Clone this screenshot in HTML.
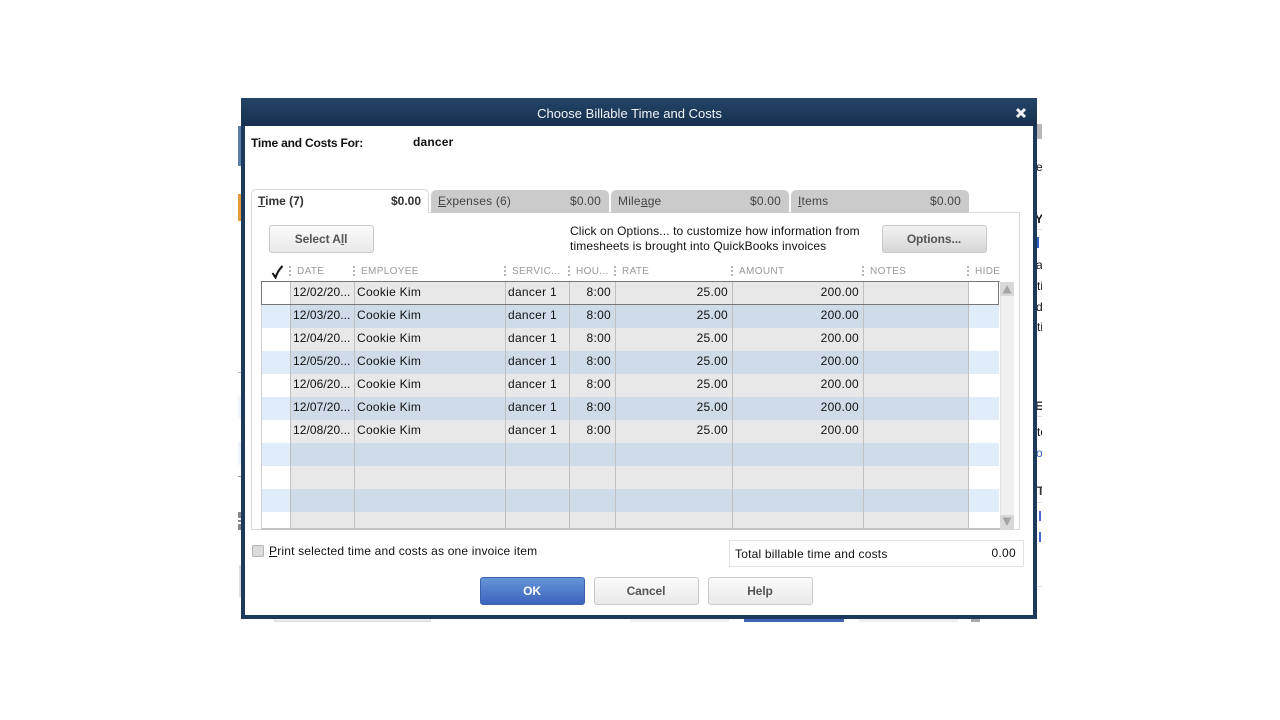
<!DOCTYPE html>
<html><head><meta charset="utf-8">
<style>
html,body{margin:0;padding:0;background:#fff;width:1280px;height:720px;overflow:hidden}
body{position:relative;font:12px "Liberation Sans",Arial,sans-serif;color:#111}
div,span.a{position:absolute;box-sizing:border-box}
.t{white-space:nowrap;line-height:14px;height:14px}
.r{text-align:right}
u{text-decoration:underline}
.tab{background:#cbcbcb;border-radius:5px 5px 0 0;height:23px;top:190px;color:#444}
.btn{border:1px solid #c9c9c9;border-radius:3px;background:linear-gradient(#fbfbfb,#e9e9e9);height:28px;width:105px;text-align:center;line-height:26px;font-weight:bold;color:#555;letter-spacing:-.1px;padding-right:1px}
.h{top:266px;color:#999;font-size:10px;letter-spacing:.35px;line-height:12px;height:12px;white-space:nowrap}
.g{width:2px;top:266px;height:11px;background:repeating-linear-gradient(#b4b4b4 0 2px,transparent 2px 4px)}
.v{top:282px;width:1px;height:246px;background:#c0c0c0}
.row{left:262px;width:737px;height:23px}
.cell{font-size:12px;letter-spacing:.28px;line-height:14px;height:14px;white-space:nowrap;color:#111}
.d{letter-spacing:.06px;left:293px}
</style></head><body>

<!-- background remnants -->
<div style="left:238px;top:126px;width:3px;height:40px;background:#5d7ea5"></div>
<div style="left:238px;top:194px;width:3px;height:27px;background:#e59a3c"></div>
<div style="left:238px;top:372px;width:3px;height:1px;background:#bbb"></div>
<div style="left:238px;top:396px;width:3px;height:23px;background:#eef3fc"></div>
<div style="left:238px;top:442px;width:3px;height:23px;background:#eef3fc"></div>
<div style="left:238px;top:476px;width:3px;height:1px;background:#999"></div>
<div style="left:238px;top:512px;width:3px;height:6px;background:#888"></div>
<div style="left:238px;top:520px;width:3px;height:2px;background:#888"></div>
<div style="left:238px;top:524px;width:3px;height:6px;background:#888"></div>
<div style="left:239px;top:565px;width:2px;height:32px;background:#ddd"></div>
<div style="left:274px;top:619px;width:157px;height:3px;background:#eee;border:1px solid #ddd;border-top:0"></div>
<div style="left:630px;top:619px;width:99px;height:3px;background:#eee"></div>
<div style="left:744px;top:619px;width:100px;height:3px;background:#3f63b5"></div>
<div style="left:859px;top:619px;width:99px;height:3px;background:#eee"></div>
<div style="left:971px;top:619px;width:9px;height:3px;background:#aaa"></div>
<div style="left:1037px;top:124px;width:5px;height:15px;background:#b8b8b8"></div>
<div class="t" style="left:1037px;top:160px;width:5px;overflow:hidden"><span style="margin-left:-1px">e</span></div>
<div class="t" style="left:1037px;top:212px;width:5px;overflow:hidden;font-weight:bold"><span style="margin-left:-2px">Y</span></div>
<div style="left:1037px;top:229px;width:5px;height:1px;background:#ddd"></div>
<div style="left:1037px;top:237px;width:2px;height:11px;background:#2f5ec4"></div>
<div class="t" style="left:1037px;top:258px;width:5px;overflow:hidden"><span style="margin-left:-1px">a</span></div>
<div class="t" style="left:1037px;top:279px;width:5px;overflow:hidden">ti</div>
<div class="t" style="left:1037px;top:300px;width:5px;overflow:hidden"><span style="margin-left:-1px">d</span></div>
<div class="t" style="left:1037px;top:320px;width:5px;overflow:hidden">ti</div>
<div class="t" style="left:1037px;top:399px;width:5px;overflow:hidden;font-weight:bold;color:#333"><span style="margin-left:-2px">E</span></div>
<div style="left:1037px;top:416px;width:5px;height:1px;background:#ddd"></div>
<div class="t" style="left:1037px;top:425px;width:5px;overflow:hidden">to</div>
<div class="t" style="left:1037px;top:446px;width:5px;overflow:hidden;color:#2f5ec4"><span style="margin-left:-1px">o</span></div>
<div class="t" style="left:1037px;top:484px;width:5px;overflow:hidden;font-weight:bold;color:#333">TF</div>
<div style="left:1037px;top:502px;width:5px;height:1px;background:#ddd"></div>
<div style="left:1039px;top:511px;width:2px;height:10px;background:#4a68d0"></div>
<div style="left:1039px;top:532px;width:2px;height:10px;background:#4a68d0"></div>
<div style="left:1037px;top:586px;width:5px;height:1px;background:#ddd"></div>

<!-- dialog -->
<div style="left:241px;top:98px;width:796px;height:521px;background:#1c3a5c;border-radius:2px 2px 0 0"></div>
<div style="left:241px;top:98px;width:796px;height:28px;background:linear-gradient(#234468,#17304d)"></div>
<div style="left:245px;top:126px;width:788px;height:489px;background:#fff"></div>
<div class="t" style="left:241px;top:106px;width:777px;text-align:center;color:#f2f4f7;font-size:13px;line-height:16px;height:16px;letter-spacing:.02px">Choose Billable Time and Costs</div>
<svg style="position:absolute;left:1015px;top:107px" width="12" height="12" viewBox="0 0 12 12"><path d="M2 2L10 10M10 2L2 10" stroke="#f0f2f5" stroke-width="3"/></svg>

<div class="t" style="left:251px;top:136px;font-weight:bold;color:#111;letter-spacing:-.2px">Time and Costs For:</div>
<div class="t" style="left:413px;top:135px;font-weight:bold;letter-spacing:.2px;color:#111">dancer</div>

<!-- pane -->
<div style="left:251px;top:212px;width:769px;height:318px;border:1px solid #d9d9d9;background:#fff"></div>
<!-- tabs -->
<div class="tab" style="left:251px;top:189px;width:178px;height:24px;background:#fff;border:1px solid #d9d9d9;border-bottom:0"></div>
<div class="t" style="left:258px;top:194px;color:#333;font-weight:bold"><u>T</u>ime (7)</div>
<div class="t r" style="left:350px;width:71px;top:194px;font-weight:bold;color:#333">$0.00</div>
<div class="tab" style="left:431px;width:178px"></div>
<div class="t" style="left:438px;top:194px;color:#444;letter-spacing:.2px"><u>E</u>xpenses (6)</div>
<div class="t r" style="left:530px;width:71px;top:194px;color:#444;letter-spacing:.2px">$0.00</div>
<div class="tab" style="left:611px;width:178px"></div>
<div class="t" style="left:618px;top:194px;color:#444;letter-spacing:.2px">Mile<u>a</u>ge</div>
<div class="t r" style="left:710px;width:71px;top:194px;color:#444;letter-spacing:.2px">$0.00</div>
<div class="tab" style="left:791px;width:178px"></div>
<div class="t" style="left:798px;top:194px;color:#444;letter-spacing:.2px"><u>I</u>tems</div>
<div class="t r" style="left:890px;width:71px;top:194px;color:#444;letter-spacing:.2px">$0.00</div>

<div class="btn" style="left:269px;top:225px">Select A<u>l</u>l</div>
<div class="btn" style="left:882px;top:225px;background:linear-gradient(#f2f2f2,#d6d6d6)">Options...</div>
<div class="t" style="left:570px;top:224px;letter-spacing:.12px">Click on Options... to customize how information from</div>
<div class="t" style="left:570px;top:239px;letter-spacing:.12px">timesheets is brought into QuickBooks invoices</div>

<!-- headers -->
<svg style="position:absolute;left:271px;top:265px" width="13" height="14" viewBox="0 0 13 14"><path d="M1.5 8L4.5 12.5C6 8 8.5 4 11.5 1" fill="none" stroke="#111" stroke-width="2"/></svg>
<div class="g" style="left:289px"></div><div class="h" style="left:297px">DATE</div>
<div class="g" style="left:353px"></div><div class="h" style="left:361px">EMPLOYEE</div>
<div class="g" style="left:504px"></div><div class="h" style="left:512px">SERVIC...</div>
<div class="g" style="left:568px"></div><div class="h" style="left:576px">HOU...</div>
<div class="g" style="left:614px"></div><div class="h" style="left:622px">RATE</div>
<div class="g" style="left:731px"></div><div class="h" style="left:739px">AMOUNT</div>
<div class="g" style="left:862px"></div><div class="h" style="left:870px">NOTES</div>
<div class="g" style="left:967px"></div><div class="h" style="left:975px">HIDE</div>

<!-- grid -->
<div style="left:261px;top:281px;width:739px;height:249px;background:#fff;border-top:1px solid #aaa;border-bottom:2px solid #c4c4c4;border-left:1px solid #d0d0d0"></div>
<div style="left:291px;top:282px;width:677px;height:246px;background:#e8e8e8"></div>
<div class="row" style="top:305px;background:#e1ecfb"></div><div style="left:291px;top:305px;width:677px;height:23px;background:#cfdbe9"></div>
<div class="row" style="top:351px;background:#e1ecfb"></div><div style="left:291px;top:351px;width:677px;height:23px;background:#cfdbe9"></div>
<div class="row" style="top:397px;background:#e1ecfb"></div><div style="left:291px;top:397px;width:677px;height:23px;background:#cfdbe9"></div>
<div class="row" style="top:443px;background:#e1ecfb"></div><div style="left:291px;top:443px;width:677px;height:23px;background:#cfdbe9"></div>
<div class="row" style="top:489px;background:#e1ecfb"></div><div style="left:291px;top:489px;width:677px;height:23px;background:#cfdbe9"></div>
<div class="v" style="left:290px"></div><div class="v" style="left:354px"></div><div class="v" style="left:505px"></div><div class="v" style="left:569px"></div><div class="v" style="left:615px"></div><div class="v" style="left:732px"></div><div class="v" style="left:863px"></div><div class="v" style="left:968px"></div>
<div style="left:261px;top:281px;width:738px;height:24px;border:1px solid #777"></div>

<!-- scrollbar -->
<div style="left:1000px;top:282px;width:14px;height:247px;background:#f0f0f0;border-left:1px solid #e4e4e4"></div>
<div style="left:1000px;top:282px;width:14px;height:14px;background:#d8d8d8"></div>
<div style="left:1000px;top:515px;width:14px;height:14px;background:#d8d8d8"></div>
<svg style="position:absolute;left:1000px;top:282px" width="14" height="14"><path d="M2.5 11.5L7 3L11.5 11.5Z" fill="#a4a4a4"/></svg>
<svg style="position:absolute;left:1000px;top:515px" width="14" height="14"><path d="M2.5 2.5L7 11L11.5 2.5Z" fill="#a4a4a4"/></svg>

<!-- rows -->
<div class="cell d" style="top:285px">12/02/20...</div><div class="cell" style="left:357px;top:285px">Cookie Kim</div><div class="cell" style="left:508px;top:285px">dancer 1</div><div class="cell r" style="left:570px;width:41px;top:285px">8:00</div><div class="cell r" style="left:640px;width:88px;top:285px">25.00</div><div class="cell r" style="left:770px;width:89px;top:285px">200.00</div>
<div class="cell d" style="top:308px">12/03/20...</div><div class="cell" style="left:357px;top:308px">Cookie Kim</div><div class="cell" style="left:508px;top:308px">dancer 1</div><div class="cell r" style="left:570px;width:41px;top:308px">8:00</div><div class="cell r" style="left:640px;width:88px;top:308px">25.00</div><div class="cell r" style="left:770px;width:89px;top:308px">200.00</div>
<div class="cell d" style="top:331px">12/04/20...</div><div class="cell" style="left:357px;top:331px">Cookie Kim</div><div class="cell" style="left:508px;top:331px">dancer 1</div><div class="cell r" style="left:570px;width:41px;top:331px">8:00</div><div class="cell r" style="left:640px;width:88px;top:331px">25.00</div><div class="cell r" style="left:770px;width:89px;top:331px">200.00</div>
<div class="cell d" style="top:354px">12/05/20...</div><div class="cell" style="left:357px;top:354px">Cookie Kim</div><div class="cell" style="left:508px;top:354px">dancer 1</div><div class="cell r" style="left:570px;width:41px;top:354px">8:00</div><div class="cell r" style="left:640px;width:88px;top:354px">25.00</div><div class="cell r" style="left:770px;width:89px;top:354px">200.00</div>
<div class="cell d" style="top:377px">12/06/20...</div><div class="cell" style="left:357px;top:377px">Cookie Kim</div><div class="cell" style="left:508px;top:377px">dancer 1</div><div class="cell r" style="left:570px;width:41px;top:377px">8:00</div><div class="cell r" style="left:640px;width:88px;top:377px">25.00</div><div class="cell r" style="left:770px;width:89px;top:377px">200.00</div>
<div class="cell d" style="top:400px">12/07/20...</div><div class="cell" style="left:357px;top:400px">Cookie Kim</div><div class="cell" style="left:508px;top:400px">dancer 1</div><div class="cell r" style="left:570px;width:41px;top:400px">8:00</div><div class="cell r" style="left:640px;width:88px;top:400px">25.00</div><div class="cell r" style="left:770px;width:89px;top:400px">200.00</div>
<div class="cell d" style="top:423px">12/08/20...</div><div class="cell" style="left:357px;top:423px">Cookie Kim</div><div class="cell" style="left:508px;top:423px">dancer 1</div><div class="cell r" style="left:570px;width:41px;top:423px">8:00</div><div class="cell r" style="left:640px;width:88px;top:423px">25.00</div><div class="cell r" style="left:770px;width:89px;top:423px">200.00</div>

<!-- bottom -->
<div style="left:252px;top:545px;width:12px;height:12px;border:1px solid #b5b5b5;border-radius:2px;background:#dcdcdc"></div>
<div class="t" style="left:269px;top:544px;letter-spacing:.18px"><u>P</u>rint selected time and costs as one invoice item</div>
<div style="left:729px;top:540px;width:295px;height:27px;border:1px solid #e2e2e2"></div>
<div class="t" style="left:735px;top:547px;letter-spacing:.2px">Total billable time and costs</div>
<div class="t r" style="left:950px;width:66px;top:546px;letter-spacing:.3px">0.00</div>

<div class="btn" style="left:480px;top:577px;border-color:#3d62ac;background:linear-gradient(#6595d8,#3d63bd);color:#fff">OK</div>
<div class="btn" style="left:594px;top:577px">Cancel</div>
<div class="btn" style="left:708px;top:577px">Help</div>
</body></html>
